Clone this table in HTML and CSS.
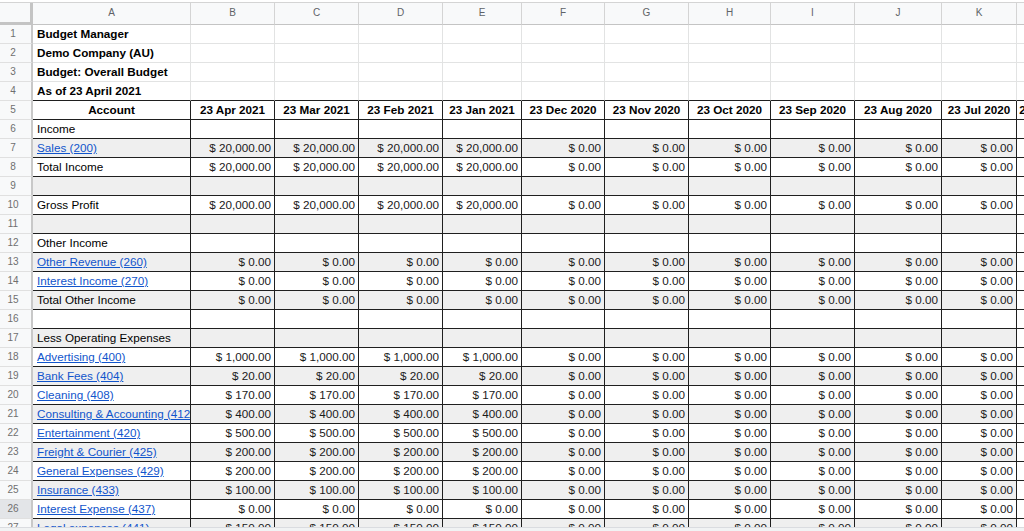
FILE: index.html
```html
<!DOCTYPE html>
<html>
<head>
<meta charset="utf-8">
<link rel="stylesheet" href="styles.css">
</head>
<body>
<div class="page">
<div class="sheet">
<div class="row head"><div class="corner"></div><div>A</div><div>B</div><div>C</div><div>D</div><div>E</div><div>F</div><div>G</div><div>H</div><div>I</div><div>J</div><div>K</div><div>L</div></div>
<div class="row"><div class="rn">1</div><div class="bold">Budget Manager</div><div></div><div></div><div></div><div></div><div></div><div></div><div></div><div></div><div></div><div></div><div></div></div>
<div class="row"><div class="rn">2</div><div class="bold">Demo Company (AU)</div><div></div><div></div><div></div><div></div><div></div><div></div><div></div><div></div><div></div><div></div><div></div></div>
<div class="row"><div class="rn">3</div><div class="bold">Budget: Overall Budget</div><div></div><div></div><div></div><div></div><div></div><div></div><div></div><div></div><div></div><div></div><div></div></div>
<div class="row pre"><div class="rn">4</div><div class="bold">As of 23 April 2021</div><div></div><div></div><div></div><div></div><div></div><div></div><div></div><div></div><div></div><div></div><div></div></div>
<div class="row t hd"><div class="rn">5</div><div>Account</div><div>23 Apr 2021</div><div>23 Mar 2021</div><div>23 Feb 2021</div><div>23 Jan 2021</div><div>23 Dec 2020</div><div>23 Nov 2020</div><div>23 Oct 2020</div><div>23 Sep 2020</div><div>23 Aug 2020</div><div>23 Jul 2020</div><div>23 Jun 2020</div></div>
<div class="row t"><div class="rn">6</div><div>Income</div><div></div><div></div><div></div><div></div><div></div><div></div><div></div><div></div><div></div><div></div><div></div></div>
<div class="row t g"><div class="rn">7</div><div><a href="#">Sales (200)</a></div><div class="n">$ 20,000.00</div><div class="n">$ 20,000.00</div><div class="n">$ 20,000.00</div><div class="n">$ 20,000.00</div><div class="n">$ 0.00</div><div class="n">$ 0.00</div><div class="n">$ 0.00</div><div class="n">$ 0.00</div><div class="n">$ 0.00</div><div class="n">$ 0.00</div><div></div></div>
<div class="row t"><div class="rn">8</div><div>Total Income</div><div class="n">$ 20,000.00</div><div class="n">$ 20,000.00</div><div class="n">$ 20,000.00</div><div class="n">$ 20,000.00</div><div class="n">$ 0.00</div><div class="n">$ 0.00</div><div class="n">$ 0.00</div><div class="n">$ 0.00</div><div class="n">$ 0.00</div><div class="n">$ 0.00</div><div></div></div>
<div class="row t g"><div class="rn">9</div><div></div><div></div><div></div><div></div><div></div><div></div><div></div><div></div><div></div><div></div><div></div><div></div></div>
<div class="row t"><div class="rn">10</div><div>Gross Profit</div><div class="n">$ 20,000.00</div><div class="n">$ 20,000.00</div><div class="n">$ 20,000.00</div><div class="n">$ 20,000.00</div><div class="n">$ 0.00</div><div class="n">$ 0.00</div><div class="n">$ 0.00</div><div class="n">$ 0.00</div><div class="n">$ 0.00</div><div class="n">$ 0.00</div><div></div></div>
<div class="row t g"><div class="rn">11</div><div></div><div></div><div></div><div></div><div></div><div></div><div></div><div></div><div></div><div></div><div></div><div></div></div>
<div class="row t"><div class="rn">12</div><div>Other Income</div><div></div><div></div><div></div><div></div><div></div><div></div><div></div><div></div><div></div><div></div><div></div></div>
<div class="row t g"><div class="rn">13</div><div><a href="#">Other Revenue (260)</a></div><div class="n">$ 0.00</div><div class="n">$ 0.00</div><div class="n">$ 0.00</div><div class="n">$ 0.00</div><div class="n">$ 0.00</div><div class="n">$ 0.00</div><div class="n">$ 0.00</div><div class="n">$ 0.00</div><div class="n">$ 0.00</div><div class="n">$ 0.00</div><div></div></div>
<div class="row t"><div class="rn">14</div><div><a href="#">Interest Income (270)</a></div><div class="n">$ 0.00</div><div class="n">$ 0.00</div><div class="n">$ 0.00</div><div class="n">$ 0.00</div><div class="n">$ 0.00</div><div class="n">$ 0.00</div><div class="n">$ 0.00</div><div class="n">$ 0.00</div><div class="n">$ 0.00</div><div class="n">$ 0.00</div><div></div></div>
<div class="row t g"><div class="rn">15</div><div>Total Other Income</div><div class="n">$ 0.00</div><div class="n">$ 0.00</div><div class="n">$ 0.00</div><div class="n">$ 0.00</div><div class="n">$ 0.00</div><div class="n">$ 0.00</div><div class="n">$ 0.00</div><div class="n">$ 0.00</div><div class="n">$ 0.00</div><div class="n">$ 0.00</div><div></div></div>
<div class="row t"><div class="rn">16</div><div></div><div></div><div></div><div></div><div></div><div></div><div></div><div></div><div></div><div></div><div></div><div></div></div>
<div class="row t g"><div class="rn">17</div><div>Less Operating Expenses</div><div></div><div></div><div></div><div></div><div></div><div></div><div></div><div></div><div></div><div></div><div></div></div>
<div class="row t"><div class="rn">18</div><div><a href="#">Advertising (400)</a></div><div class="n">$ 1,000.00</div><div class="n">$ 1,000.00</div><div class="n">$ 1,000.00</div><div class="n">$ 1,000.00</div><div class="n">$ 0.00</div><div class="n">$ 0.00</div><div class="n">$ 0.00</div><div class="n">$ 0.00</div><div class="n">$ 0.00</div><div class="n">$ 0.00</div><div></div></div>
<div class="row t g"><div class="rn">19</div><div><a href="#">Bank Fees (404)</a></div><div class="n">$ 20.00</div><div class="n">$ 20.00</div><div class="n">$ 20.00</div><div class="n">$ 20.00</div><div class="n">$ 0.00</div><div class="n">$ 0.00</div><div class="n">$ 0.00</div><div class="n">$ 0.00</div><div class="n">$ 0.00</div><div class="n">$ 0.00</div><div></div></div>
<div class="row t"><div class="rn">20</div><div><a href="#">Cleaning (408)</a></div><div class="n">$ 170.00</div><div class="n">$ 170.00</div><div class="n">$ 170.00</div><div class="n">$ 170.00</div><div class="n">$ 0.00</div><div class="n">$ 0.00</div><div class="n">$ 0.00</div><div class="n">$ 0.00</div><div class="n">$ 0.00</div><div class="n">$ 0.00</div><div></div></div>
<div class="row t g"><div class="rn">21</div><div><a href="#">Consulting &amp; Accounting (412)</a></div><div class="n">$ 400.00</div><div class="n">$ 400.00</div><div class="n">$ 400.00</div><div class="n">$ 400.00</div><div class="n">$ 0.00</div><div class="n">$ 0.00</div><div class="n">$ 0.00</div><div class="n">$ 0.00</div><div class="n">$ 0.00</div><div class="n">$ 0.00</div><div></div></div>
<div class="row t"><div class="rn">22</div><div><a href="#">Entertainment (420)</a></div><div class="n">$ 500.00</div><div class="n">$ 500.00</div><div class="n">$ 500.00</div><div class="n">$ 500.00</div><div class="n">$ 0.00</div><div class="n">$ 0.00</div><div class="n">$ 0.00</div><div class="n">$ 0.00</div><div class="n">$ 0.00</div><div class="n">$ 0.00</div><div></div></div>
<div class="row t g"><div class="rn">23</div><div><a href="#">Freight &amp; Courier (425)</a></div><div class="n">$ 200.00</div><div class="n">$ 200.00</div><div class="n">$ 200.00</div><div class="n">$ 200.00</div><div class="n">$ 0.00</div><div class="n">$ 0.00</div><div class="n">$ 0.00</div><div class="n">$ 0.00</div><div class="n">$ 0.00</div><div class="n">$ 0.00</div><div></div></div>
<div class="row t"><div class="rn">24</div><div><a href="#">General Expenses (429)</a></div><div class="n">$ 200.00</div><div class="n">$ 200.00</div><div class="n">$ 200.00</div><div class="n">$ 200.00</div><div class="n">$ 0.00</div><div class="n">$ 0.00</div><div class="n">$ 0.00</div><div class="n">$ 0.00</div><div class="n">$ 0.00</div><div class="n">$ 0.00</div><div></div></div>
<div class="row t g"><div class="rn">25</div><div><a href="#">Insurance (433)</a></div><div class="n">$ 100.00</div><div class="n">$ 100.00</div><div class="n">$ 100.00</div><div class="n">$ 100.00</div><div class="n">$ 0.00</div><div class="n">$ 0.00</div><div class="n">$ 0.00</div><div class="n">$ 0.00</div><div class="n">$ 0.00</div><div class="n">$ 0.00</div><div></div></div>
<div class="row t"><div class="rn sel">26</div><div><a href="#">Interest Expense (437)</a></div><div class="n">$ 0.00</div><div class="n">$ 0.00</div><div class="n">$ 0.00</div><div class="n">$ 0.00</div><div class="n">$ 0.00</div><div class="n">$ 0.00</div><div class="n">$ 0.00</div><div class="n">$ 0.00</div><div class="n">$ 0.00</div><div class="n">$ 0.00</div><div></div></div>
<div class="row t g"><div class="rn">27</div><div><a href="#">Legal expenses (441)</a></div><div class="n">$ 150.00</div><div class="n">$ 150.00</div><div class="n">$ 150.00</div><div class="n">$ 150.00</div><div class="n">$ 0.00</div><div class="n">$ 0.00</div><div class="n">$ 0.00</div><div class="n">$ 0.00</div><div class="n">$ 0.00</div><div class="n">$ 0.00</div><div></div></div>
</div>
<div class="hscroll"></div>
</div>
</body>
</html>
```

FILE: styles.css
```css
html, body {
  margin: 0;
  padding: 0;
  background: #ffffff;
  overflow: hidden;
  font-family: "Liberation Sans", Arial, sans-serif;
  color: #000000;
}

.page {
  display: flex;
  flex-direction: column;
  width: 1024px;
  height: 531px;
  overflow: hidden;
}

.sheet {
  flex: 1;
  min-height: 0;
  overflow: hidden;
  padding-top: 2px;
}

.hscroll {
  height: 4px;
  box-sizing: border-box;
  border-top: 1px solid #dadce0;
  background: #f1f3f4;
}

.row {
  display: grid;
  grid-template-columns: 33px 158px 84px 84px 84px 79px 83px 84px 82px 84px 87px 75px 72px;
  width: 1089px;
  height: 19px;
}

.row > div {
  box-sizing: border-box;
  border-right: 1px solid #e2e3e3;
  border-bottom: 1px solid #e2e3e3;
  font-size: 11.7px;
  line-height: 18px;
  padding: 0 3px 0 4px;
  white-space: nowrap;
  overflow: hidden;
}

.row.head {
  height: 22px;
  border-top: 1px solid #d4d4d4;
}

.row.head > div {
  background: #f8f9fa;
  border-right-color: #d4d4d4;
  border-bottom-color: #c4c4c4;
  font-size: 10px;
  line-height: 20px;
  color: #5f6368;
  text-align: center;
  padding: 0;
}

.row.head > .corner {
  border-right: 3px solid #c4c4c4;
  border-bottom: 3px solid #c4c4c4;
}

.row > .rn {
  background: #f8f9fa;
  border-right: 2px solid #c8c8c8;
  border-bottom-color: #e0e0e0;
  color: #6f6f6f;
  font-size: 10px;
  text-align: center;
  padding: 0 5px 0 0;
}

.row > .rn.sel {
  background: #e3e5e8;
}

.bold {
  font-weight: bold;
}

.row.pre > div:not(.rn) {
  border-bottom-color: #1f1f1f;
}

.row.t > div:not(.rn) {
  border-right-color: #1f1f1f;
  border-bottom-color: #1f1f1f;
}

.row.hd > div:not(.rn) {
  font-weight: bold;
  text-align: center;
  padding: 0;
  color: #000;
}

.row.g > div:not(.rn):not(:last-child) {
  background: #efefef;
}

.row > .n {
  text-align: right;
  color: #1a1a1a;
}

a {
  color: #1155cc;
  text-decoration: underline;
}
```
